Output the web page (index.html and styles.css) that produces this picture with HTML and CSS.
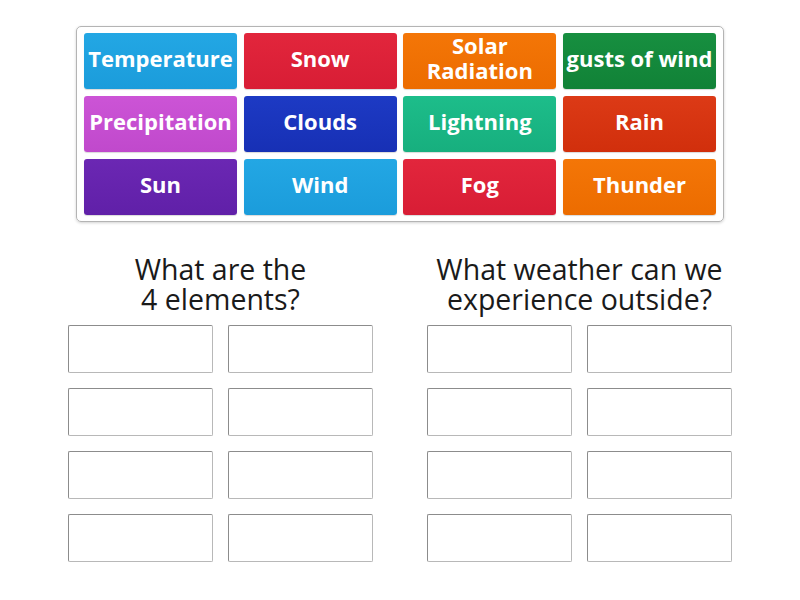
FILE: index.html
```html
<!DOCTYPE html>
<html>
<head>
<meta charset="utf-8">
<link rel="stylesheet" href="styles.css">
</head>
<body>
<div class="page">
  <div class="board">
    <div class="tile c-blue">Temperature</div>
    <div class="tile c-red">Snow</div>
    <div class="tile c-orange two">Solar<br>Radiation</div>
    <div class="tile c-green">gusts of wind</div>
    <div class="tile c-magenta">Precipitation</div>
    <div class="tile c-navy">Clouds</div>
    <div class="tile c-teal">Lightning</div>
    <div class="tile c-rust">Rain</div>
    <div class="tile c-purple">Sun</div>
    <div class="tile c-blue">Wind</div>
    <div class="tile c-red">Fog</div>
    <div class="tile c-orange">Thunder</div>
  </div>
  <div class="groups">
    <div class="group">
      <div class="heading">What are the<br>4 elements?</div>
      <div class="slots">
        <div class="slot"></div><div class="slot"></div>
        <div class="slot"></div><div class="slot"></div>
        <div class="slot"></div><div class="slot"></div>
        <div class="slot"></div><div class="slot"></div>
      </div>
    </div>
    <div class="group">
      <div class="heading">What weather can we<br>experience outside?</div>
      <div class="slots">
        <div class="slot"></div><div class="slot"></div>
        <div class="slot"></div><div class="slot"></div>
        <div class="slot"></div><div class="slot"></div>
        <div class="slot"></div><div class="slot"></div>
      </div>
    </div>
  </div>
</div>
</body>
</html>
```

FILE: styles.css
```css
html, body {
  margin: 0;
  padding: 0;
  background: #ffffff;
}

.page {
  width: 800px;
  height: 600px;
  padding-top: 26px;
  box-sizing: border-box;
  font-family: "Open Sans", "DejaVu Sans", sans-serif;
}

.board {
  width: 648px;
  box-sizing: border-box;
  margin: 0 auto 0 76px;
  border: 1px solid #b4b4b4;
  border-radius: 5px;
  box-shadow: 0 1px 3px rgba(0, 0, 0, 0.18);
  padding: 6px 7px;
  display: grid;
  grid-template-columns: repeat(4, 1fr);
  grid-template-rows: repeat(3, 56px);
  column-gap: 6.67px;
  row-gap: 7px;
}

.tile {
  border-radius: 3px;
  color: #ffffff;
  font-weight: 700;
  font-size: 22px;
  line-height: 25px;
  display: flex;
  align-items: center;
  justify-content: center;
  text-align: center;
  padding-bottom: 5px;
  box-sizing: border-box;
  white-space: nowrap;
  box-shadow: 0 1px 1px rgba(0, 0, 0, 0.15);
}

.tile.two {
  padding-bottom: 7px;
}

.c-blue    { background: linear-gradient(#23a7e4, #1b9cdb); }
.c-red     { background: linear-gradient(#e2263c, #d81d35); }
.c-orange  { background: linear-gradient(#f47607, #ec6c00); }
.c-green   { background: linear-gradient(#178f40, #118237); }
.c-magenta { background: linear-gradient(#cc54d6, #c049cc); }
.c-navy    { background: linear-gradient(#1d3ac4, #1730b5); }
.c-teal    { background: linear-gradient(#1dbd8a, #17af7e); }
.c-rust    { background: linear-gradient(#dc3a16, #d12f0c); }
.c-purple  { background: linear-gradient(#6b27b3, #6020a8); }

.groups {
  display: flex;
  justify-content: center;
  gap: 54px;
  margin-top: 32px;
}

.group {
  width: 305px;
}

.heading {
  font-size: 28.5px;
  line-height: 30px;
  color: #1a1a1a;
  text-align: center;
  margin-bottom: 11px;
  white-space: nowrap;
}

.slots {
  display: grid;
  grid-template-columns: 145px 145px;
  grid-auto-rows: 48px;
  column-gap: 15px;
  row-gap: 15px;
}

.slot {
  box-sizing: border-box;
  border: 1px solid;
  border-color: #8c8c8c #b8b8b8 #b8b8b8 #8c8c8c;
  border-radius: 2px;
  background: #ffffff;
}
```
